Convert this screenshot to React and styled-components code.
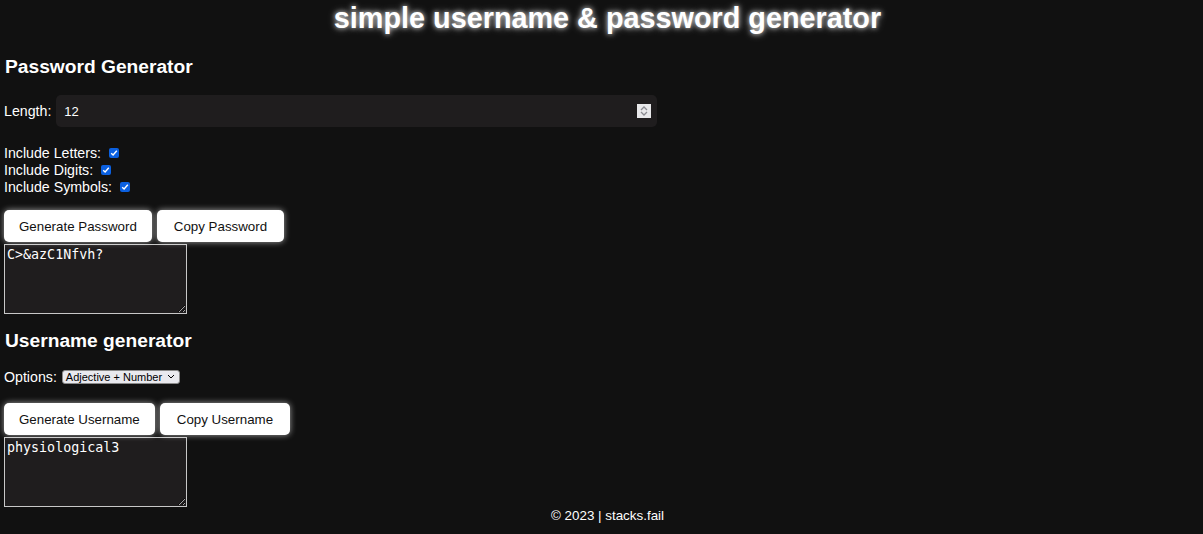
import React from "react";
import styled, { createGlobalStyle } from "styled-components";

const Global = createGlobalStyle`
  html, body { margin: 0; padding: 0; background: #111111; }
  body { font-family: "Liberation Sans", Arial, sans-serif; color: #ffffff; }
`;

const Page = styled.div`
  padding: 0 0 0 4px;
  min-height: 534px;
  box-sizing: border-box;
`;

const Title = styled.h1`
  margin: 0 0 0 8px;
  padding-top: 2px;
  text-align: center;
  font-size: 28.8px;
  font-weight: bold;
  line-height: 32px;
  color: #fff;
  text-shadow: 0 0 5px rgba(255,255,255,0.8), 0 0 10px rgba(255,255,255,0.4);
`;

const SectionTitle = styled.h2`
  margin: ${p => p.$top}px 0 0 1px;
  font-size: 19.2px;
  line-height: 22px;
  font-weight: bold;
`;

const Row = styled.div`
  display: flex;
  align-items: center;
  font-size: 14px;
  margin-top: ${p => p.$top || 0}px;
`;

const Label = styled.label`
  font-size: 14.2px;
  line-height: 17px;
  margin-right: 5px;
`;

const NumberInput = styled.div`
  width: 601px;
  height: 32px;
  box-sizing: border-box;
  background: #1f1d1e;
  border-radius: 5px;
  display: flex;
  align-items: center;
  justify-content: space-between;
  padding: 0 8px;
  font-size: 13px;
  color: #fff;
`;

const Spinner = styled.div`
  width: 14px;
  height: 14px;
  background: #e8e8ea;
  display: flex;
  align-items: center;
  justify-content: center;
  margin-right: -2px;
`;

const Checks = styled.div`
  margin-top: 17px;
  display: flex;
  flex-direction: column;
`;

const CheckRow = styled.div`
  display: flex;
  align-items: center;
  height: 17px;
  font-size: 14.2px;
`;

const Check = styled.span`
  width: 10px;
  height: 10px;
  background: #0b60e0;
  border-radius: 2px;
  margin-left: 8px;
  display: inline-flex;
  align-items: center;
  justify-content: center;
`;

const Buttons = styled.div`
  display: flex;
  gap: 5px;
  margin-top: ${p => p.$top}px;
`;

const Button = styled.button`
  height: 32px;
  padding: 0 ${p => p.$pad || 15}px;
  background: #fff;
  color: #111;
  border: none;
  border-radius: 5px;
  font-family: "Liberation Sans", Arial, sans-serif;
  font-size: 13.333px;
  box-shadow: 0 0 6px rgba(255,255,255,0.6);
  cursor: pointer;
`;

const Output = styled.textarea`
  display: block;
  width: 183px;
  height: 70px;
  box-sizing: border-box;
  margin-top: 2px;
  background: #1f1d1e;
  color: #fff;
  border: 1px solid #c8c8c8;
  padding: 2px 2px;
  font-family: "DejaVu Sans Mono", "Liberation Mono", monospace;
  font-size: 13.333px;
  line-height: 16px;
  resize: both;
  outline: none;
`;

const Select = styled.div`
  display: inline-flex;
  align-items: center;
  height: 14px;
  width: 118px;
  box-sizing: border-box;
  background: #e9e9ee;
  border: 1px solid #8a8a8a;
  border-radius: 3px;
  color: #000;
  font-size: 11px;
  padding: 0 4px 0 3px;
  justify-content: space-between;
  margin-top: -2px;
`;

const Footer = styled.footer`
  margin-left: 8px;
  text-align: center;
  font-size: 13.4px;
  margin-top: 0;
  line-height: 17px;
`;

const CheckMark = () => (
  <svg width="8" height="8" viewBox="0 0 8 8">
    <path d="M1.2 4.2 L3.1 6 L6.8 1.8" stroke="#fff" strokeWidth="1.4" fill="none" />
  </svg>
);

export default function App() {
  return (
    <Page>
      <Global />
      <Title>simple username &amp; password generator</Title>

      <SectionTitle $top={22}>Password Generator</SectionTitle>
      <Row $top={17}>
        <Label>Length:</Label>
        <NumberInput>
          <span>12</span>
          <Spinner>
            <svg width="10" height="12" viewBox="0 0 10 12">
              <path d="M2 5 L5 2 L8 5 M2 7 L5 10 L8 7" stroke="#8a8a90" strokeWidth="1.3" fill="none" />
            </svg>
          </Spinner>
        </NumberInput>
      </Row>

      <Checks>
        <CheckRow>Include Letters:<Check><CheckMark /></Check></CheckRow>
        <CheckRow>Include Digits:<Check><CheckMark /></Check></CheckRow>
        <CheckRow>Include Symbols:<Check><CheckMark /></Check></CheckRow>
      </Checks>

      <Buttons $top={15}>
        <Button>Generate Password</Button>
        <Button $pad={17}>Copy Password</Button>
      </Buttons>
      <Output readOnly value="C>&azC1Nfvh?" />

      <SectionTitle $top={16}>Username generator</SectionTitle>
      <Row $top={17}>
        <Label>Options:</Label>
        <Select>
          <span>Adjective + Number</span>
          <svg width="8" height="5" viewBox="0 0 8 5">
            <path d="M1 1 L4 4 L7 1" stroke="#000" strokeWidth="1" fill="none" />
          </svg>
        </Select>
      </Row>

      <Buttons $top={17}>
        <Button>Generate Username</Button>
        <Button $pad={17}>Copy Username</Button>
      </Buttons>
      <Output readOnly value="physiological3" />

      <Footer>© 2023 | stacks.fail</Footer>
    </Page>
  );
}
